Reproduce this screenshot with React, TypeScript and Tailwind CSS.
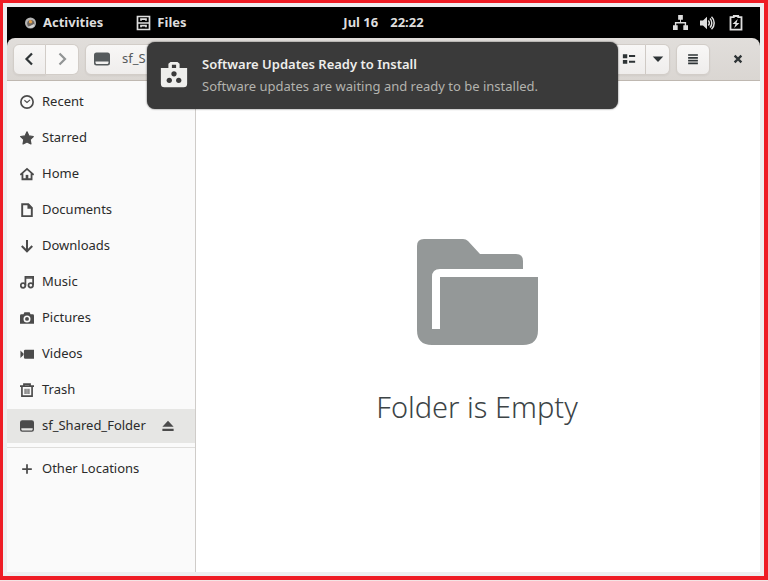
import { ReactNode } from "react";

const Icon = ({
  children,
  className = "size-4",
}: {
  children: ReactNode;
  className?: string;
}) => (
  <svg
    xmlns="http://www.w3.org/2000/svg"
    viewBox="0 0 16 16"
    fill="currentColor"
    aria-hidden="true"
    className={`shrink-0 ${className}`}
  >
    {children}
  </svg>
);

const drive = (
  <path
    fillRule="evenodd"
    d="M2.5 1.500h11A2.500 2.500 0 0 1 16 4v8a2.500 2.500 0 0 1-2.500 2.500h-11A2.500 2.500 0 0 1 0 12V4a2.500 2.500 0 0 1 2.500-2.500ZM1.500 10.500v1.500l.8 1h11.400l.8-1v-1.500Z"
  />
);

const places = [
  {
    label: "Recent",
    icon: (
      <g fill="none" stroke="currentColor">
        <circle cx="8" cy="8" r="7" strokeWidth="1.900" />
        <path d="M5 6 8 8.500l3.500-3" strokeWidth="1.300" />
      </g>
    ),
  },
  {
    label: "Starred",
    icon: (
      <path
        d="M8 1l2.200 4.600 5 .7-3.600 3.500.9 5L8 12.400l-4.500 2.400.9-5L.8 6.300l5-.7z"
        stroke="currentColor"
        strokeWidth="1.400"
        strokeLinejoin="round"
      />
    ),
  },
  {
    label: "Home",
    icon: (
      <>
        <path
          d="M.3 9 8 2.200 15.700 9M2.800 7.500v6.500h10.400V7.500"
          fill="none"
          stroke="currentColor"
          strokeWidth="2.100"
        />
        <path d="M6.500 9h3v5h-3z" />
      </>
    ),
  },
  {
    label: "Documents",
    icon: (
      <>
        <path
          d="M2.500 1.500h7l4 4v9.500h-11z"
          fill="none"
          stroke="currentColor"
          strokeWidth="2.200"
        />
        <path d="M8.500 1v5.500H14v-1L9.500 1z" />
      </>
    ),
  },
  {
    label: "Downloads",
    icon: (
      <path
        d="M8 1v12.500M2 8l6 6 6-6"
        fill="none"
        stroke="currentColor"
        strokeWidth="2.300"
      />
    ),
  },
  {
    label: "Music",
    icon: (
      <g fill="none" stroke="currentColor">
        <path d="M6.200 12V2h8.800v9.500" strokeWidth="2" />
        <path d="M6 3.500h9" strokeWidth="1.500" />
        <circle cx="3.500" cy="12" r="2.600" strokeWidth="2" />
        <circle cx="12.300" cy="11.800" r="2.600" strokeWidth="2" />
      </g>
    ),
  },
  {
    label: "Pictures",
    icon: (
      <>
        <path
          fillRule="evenodd"
          d="M5 1.500h6l1 2.300h2.500A1.500 1.500 0 0 1 16 5.300V14.500H0V5.300a1.500 1.500 0 0 1 1.500-1.500H4zM8 5a4 4 0 1 0 0 8 4 4 0 0 0 0-8Z"
        />
        <circle cx="8" cy="9" r="2.200" />
      </>
    ),
  },
  {
    label: "Videos",
    icon: <path d="M6 3h10v10.500H6A1.500 1.500 0 0 1 4.500 12V4.500A1.500 1.500 0 0 1 6 3ZM.5 4l3.500 3.500v1.500L.5 12.500z" />,
  },
  {
    label: "Trash",
    icon: (
      <>
        <path
          d="M0 3.500h16M4.500 3V1.200h7V3M2.200 4v11h11.600V4"
          fill="none"
          stroke="currentColor"
          strokeWidth="1.900"
        />
        <path
          d="M5.800 6.500v6M8 6.500v6M10.200 6.500v6"
          stroke="currentColor"
          strokeWidth="1.200"
        />
      </>
    ),
  },
  { label: "sf_Shared_Folder", icon: drive, active: true },
];

const headerButton =
  "flex h-[31px] items-center border border-[#d2cdc8] bg-linear-to-b from-[#f8f7f6] to-[#efedec] text-[#2e3436] shadow-xs";

const TopBar = () => (
  <header className="grid h-[31px] grid-cols-[1fr_auto_1fr] items-center bg-black text-[13px] font-bold text-[#dedede]">
    <nav className="flex items-center gap-8 pl-4">
      <button className="flex items-center gap-1">
        <Icon>
          <circle cx="7.500" cy="8" r="5.500" fill="#b5b5b5" />
          <circle cx="7.800" cy="8.500" r="3.600" fill="#6b6560" />
          <path d="M6 5.500 8 5l1.500 2L8 8.500 6 8z" fill="#e2a04a" />
          <path d="M5 12 11 9l.5 2.500L8 13z" fill="#d4d4d4" />
        </Icon>
        Activities
      </button>
      <button className="flex items-center gap-1.5">
        <Icon>
          <path
            d="M2.500 1.500h12v13h-12zM2.500 8h12M6 5.800V4.200h5v1.600M6 12.200v-1.600h5v1.600"
            fill="none"
            stroke="currentColor"
            strokeWidth="1.700"
          />
        </Icon>
        Files
      </button>
    </nav>
    <button className="flex gap-3">
      <span>Jul 16</span>
      <span>22:22</span>
    </button>
    <button
      aria-label="System menu"
      className="flex items-center gap-3 justify-self-end pr-4"
    >
      <Icon className="size-[15px]">
        <path d="M5.500 0h5v5h-2v2.500H14V11h2v5h-5v-5h1.500V9h-9v2H5v5H0v-5h2V7.500h5.500V5h-2z" />
      </Icon>
      <Icon>
        <path d="M0 5.500h3L7 1.800v12.400L3 10.500H0z" />
        <path
          d="M8.300 5.500a3.500 3.500 0 0 1 0 5M10 3.500a6.500 6.500 0 0 1 0 9M11.500 1.800a8.500 8.500 0 0 1 0 12.400"
          fill="none"
          stroke="currentColor"
          strokeWidth="1.500"
        />
      </Icon>
      <Icon>
        <path
          d="M5.800 2.200V1h4.400v1.200h3.300v12.500h-11V2.200z"
          fill="none"
          stroke="currentColor"
          strokeWidth="1.800"
        />
        <path d="M9.800 4 4.500 9h3l-1.300 4L11.500 8h-3z" />
      </Icon>
    </button>
  </header>
);

const HeaderBar = () => (
  <div className="flex h-[43px] items-center justify-between rounded-t-lg border-b border-[#bfb8b1] bg-linear-to-b from-[#e1dedb] to-[#dad6d2] px-1.5">
    <div className="flex">
      <button
        aria-label="Back"
        className={`${headerButton} w-[33px] justify-center rounded-l-md`}
      >
        <Icon>
          <path
            d="M10 2.500 4.500 8l5.500 5.500"
            fill="none"
            stroke="currentColor"
            strokeWidth="2.200"
          />
        </Icon>
      </button>
      <button
        aria-label="Forward"
        disabled
        className="flex h-[31px] w-[33px] items-center justify-center rounded-r-md border border-l-0 border-[#d2cdc8] bg-[#faf9f8] text-[#929595]"
      >
        <Icon>
          <path
            d="M5.500 2.500 11 8l-5.500 5.500"
            fill="none"
            stroke="currentColor"
            strokeWidth="2.200"
          />
        </Icon>
      </button>
      <button
        className={`${headerButton} ml-1.5 w-32 gap-3 rounded-md px-2 text-[13px] text-[#555a5c]`}
      >
        <Icon>{drive}</Icon>
        sf_S
      </button>
    </div>
    <div className="flex">
      <button
        aria-label="List view"
        className={`${headerButton} w-[34px] justify-center rounded-l-md`}
      >
        <Icon className="size-3.5">
          <path d="M1 2.500h5V7H1zM1 9h5v4.500H1zM8 3.500h7v2.300H8zM8 10h7v2.300H8z" />
        </Icon>
      </button>
      <button
        aria-label="View options"
        className={`${headerButton} w-6 justify-center rounded-r-md border-l-0`}
      >
        <Icon className="size-3.5">
          <path d="M2 5h12l-6 6.500z" />
        </Icon>
      </button>
      <button
        aria-label="Main menu"
        className={`${headerButton} ml-1.5 w-[34px] justify-center rounded-md`}
      >
        <Icon className="size-3">
          <path d="M1.500 1.500h13v2.300h-13zM1.500 5.200h13v2.300h-13zM1.500 9h13v2.300h-13zM1.500 12.700h13V15h-13z" />
        </Icon>
      </button>
      <button
        aria-label="Close"
        className="ml-3 flex h-[31px] w-8 items-center justify-center text-[#2e3436]"
      >
        <Icon className="size-3">
          <path
            d="m3.500 3.500 9 9M12.500 3.500l-9 9"
            stroke="currentColor"
            strokeWidth="3"
          />
        </Icon>
      </button>
    </div>
  </div>
);

const Sidebar = () => (
  <aside className="w-[189px] shrink-0 border-r border-[#cfccc9] bg-[#fafafa] pt-1 text-[13px] text-[#2b2b2b]">
    <ul className="flex flex-col gap-0.5">
      {places.map((place) => (
        <li
          key={place.label}
          className={`flex h-[34px] items-center pl-[13px] ${
            place.active ? "bg-[#e6e6e4]" : ""
          }`}
        >
          <a href="#" className="flex items-center gap-2">
            <Icon className="size-3.5 text-[#4b4b4b]">{place.icon}</Icon>
            {place.label}
          </a>
          {place.active && (
            <button aria-label="Eject" className="ml-4 text-[#4b4b4b]">
              <Icon className="size-3">
                <path d="M8 1l7.500 8H.5zM.5 11.500h15v3H.5z" />
              </Icon>
            </button>
          )}
        </li>
      ))}
    </ul>
    <hr className="my-1 border-[#dedddb]" />
    <a href="#" className="flex h-[34px] items-center gap-2 pl-[13px]">
      <Icon className="size-3.5 text-[#4b4b4b]">
        <path d="M7 2.500h2V7h4.500v2H9v4.500H7V9H2.500V7H7z" />
      </Icon>
      Other Locations
    </a>
  </aside>
);

const Notification = () => (
  <div
    role="alert"
    className="absolute top-[35px] right-[142px] left-[140px] flex h-[67px] items-center gap-3.5 rounded-lg bg-[#3a3a3a] pb-0.5 pl-[13px] text-[13px] shadow-[0_0_2px_#000000aa]"
  >
    <Icon className="size-7 text-[#eeeeec]">
      <path
        fillRule="evenodd"
        d="M4.800 4V1.500L6 .5h4l1.200 1V4H15.500v9a2 2 0 0 1-2 2h-11a2 2 0 0 1-2-2V4Zm2 0h2.400V2.200H6.800Z"
      />
      <g fill="#3a3a3a">
        <circle cx="8" cy="7.300" r="1.500" />
        <circle cx="5.300" cy="11" r="1.500" />
        <circle cx="10.700" cy="11" r="1.500" />
      </g>
    </Icon>
    <div>
      <p className="leading-[22px] font-semibold text-[#eeeeec]">
        Software Updates Ready to Install
      </p>
      <p className="leading-[22px] text-[#b3b3ae]">
        Software updates are waiting and ready to be installed.
      </p>
    </div>
  </div>
);

const App = () => {
  return (
    <div className="min-h-screen bg-[#f4e3e4] pb-px font-['Noto_Sans',sans-serif]">
      <div className="flex min-h-[calc(100vh-1px)] flex-col border-4 border-t-[3px] border-l-[3px] border-[#ee1c25] bg-[#eeeef0] p-1">
        <div className="relative flex grow flex-col bg-black">
          <TopBar />
          <HeaderBar />
          <div className="flex grow bg-white">
            <Sidebar />
            <main className="flex grow flex-col items-center justify-center gap-11 pt-2.5 pr-0.5">
              <svg
                viewBox="0 0 121 106"
                fill="#949898"
                aria-hidden="true"
                className="w-[121px]"
              >
                <path d="M7 0h39q3 0 5 2l12 13h36q7 0 7 7v8H23q-8 0-8 8v52h8V38h98v53q0 15-15 15H15Q0 106 0 91V7q0-7 7-7z" />
              </svg>
              <h1 className="text-[29px] leading-9 font-light text-[#3d4446]">
                Folder is Empty
              </h1>
            </main>
          </div>
          <Notification />
        </div>
      </div>
    </div>
  );
};

export default App;
